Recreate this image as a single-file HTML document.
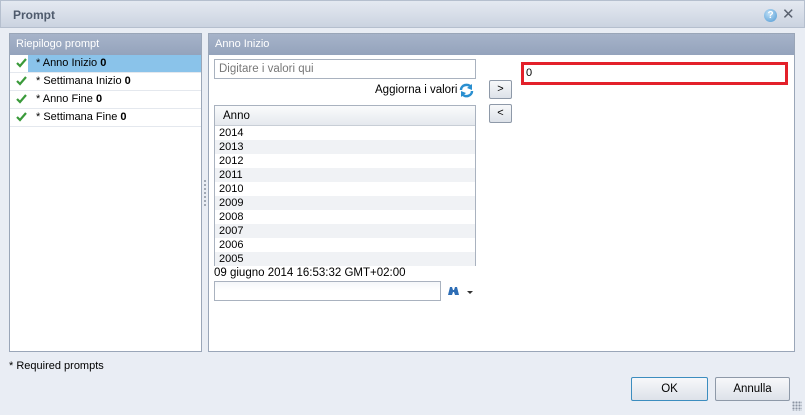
<!DOCTYPE html>
<html><head><style>
*{margin:0;padding:0;box-sizing:border-box}
body{width:805px;height:415px;overflow:hidden;background:#e9edf4;font-family:"Liberation Sans",sans-serif;font-size:11px;color:#000;position:relative}
.a{position:absolute}
.title{left:0;top:0;width:805px;height:28px;background:linear-gradient(#e4e9f1,#cbd3e0);border:1px solid #b5bfce}
.hdr{background:linear-gradient(#a6b3c9,#94a3bc);color:#fff;font-size:11px;padding:4px 6px;height:21px}
.row{height:18px;border-bottom:1px solid #e4e8ee;position:relative;padding-left:26px;line-height:17px}
.row .ck{position:absolute;left:6px;top:3px}
.lr{height:14px;line-height:14px;padding-left:4px;font-size:11px}
.btn{border:1px solid #8e99a8;border-radius:2px;background:linear-gradient(#f7f8fa,#dde2e9);text-align:center}
</style></head><body>
<div class="a title"><div class="a" style="left:12px;top:7px;font-weight:bold;font-size:12px;color:#4e5a6c">Prompt</div>
<div class="a" style="left:763px;top:8px;width:13px;height:13px;border-radius:50%;background:radial-gradient(circle at 40% 35%,#bfe0f7,#4d97d2);color:#fff;font-size:10px;font-weight:bold;text-align:center;line-height:13px">?</div>
<div class="a" style="left:781px;top:4px;font-size:15px;color:#5a6270">✕</div></div>

<div class="a" style="left:9px;top:33px;width:193px;height:319px;background:#fff;border:1px solid #9aa6b8">
<div class="hdr">Riepilogo prompt</div>
<div class="row" style="background:#fff"><div class="a" style="left:18px;top:0;width:173px;height:17px;background:#8ac3ea"></div><svg class="ck" width="11" height="10"><path d="M1 5 L4 8 L10 1" stroke="#3a9a3a" stroke-width="2.2" fill="none"/></svg><span style="position:relative">* Anno Inizio <b>0</b></span></div>
<div class="row"><svg class="ck" width="11" height="10"><path d="M1 5 L4 8 L10 1" stroke="#3a9a3a" stroke-width="2.2" fill="none"/></svg>* Settimana Inizio <b>0</b></div>
<div class="row"><svg class="ck" width="11" height="10"><path d="M1 5 L4 8 L10 1" stroke="#3a9a3a" stroke-width="2.2" fill="none"/></svg>* Anno Fine <b>0</b></div>
<div class="row"><svg class="ck" width="11" height="10"><path d="M1 5 L4 8 L10 1" stroke="#3a9a3a" stroke-width="2.2" fill="none"/></svg>* Settimana Fine <b>0</b></div>
</div>
<div class="a" style="left:204px;top:180px;width:2px;height:26px;border-left:2px dotted #a0a8b4"></div>

<div class="a" style="left:208px;top:33px;width:587px;height:319px;background:#fff;border:1px solid #9aa6b8">
<div class="hdr">Anno Inizio</div></div>
<div class="a" style="left:214px;top:59px;width:262px;height:20px;border:1px solid #a9b2bf;color:#777;padding:3px 4px;font-size:11.5px">Digitare i valori qui</div>
<div class="a" style="left:375px;top:84px;font-size:11.5px">Aggiorna i valori</div>
<svg class="a" style="left:458px;top:83px" width="17" height="15" viewBox="0 0 17 15"><path d="M3 7 A5.5 5 0 0 1 13 4" stroke="#2a8fd0" stroke-width="2.5" fill="none"/><path d="M14 1 L14 7 L9 5z" fill="#2a8fd0"/><path d="M14 8 A5.5 5 0 0 1 4 11" stroke="#2a8fd0" stroke-width="2.5" fill="none"/><path d="M3 14 L3 8 L8 10z" fill="#2a8fd0"/></svg>
<div class="a btn" style="left:489px;top:80px;width:23px;height:19px;line-height:17px">&gt;</div>
<div class="a btn" style="left:489px;top:104px;width:23px;height:19px;line-height:17px">&lt;</div>
<div class="a" style="left:521px;top:62px;width:267px;height:23px;border:3px solid #e3202a;padding:1px 2px;font-size:11px;line-height:14px">0</div>

<div class="a" style="left:214px;top:105px;width:262px;height:161px;border:1px solid #a9b2bf;background:#fff">
<div style="height:20px;background:linear-gradient(#fafbfc,#e5e9ee);border-bottom:1px solid #c8ced6;padding:4px 8px;font-size:11.5px">Anno</div>
<div class="lr">2014</div><div class="lr" style="background:#f0f2f5">2013</div><div class="lr">2012</div><div class="lr" style="background:#f0f2f5">2011</div><div class="lr">2010</div><div class="lr" style="background:#f0f2f5">2009</div><div class="lr">2008</div><div class="lr" style="background:#f0f2f5">2007</div><div class="lr">2006</div><div class="lr" style="background:#f0f2f5">2005</div>
</div>
<div class="a" style="left:214px;top:267px;font-size:11.5px">09 giugno 2014 16:53:32 GMT+02:00</div>
<div class="a" style="left:214px;top:281px;width:227px;height:20px;border:1px solid #a9b2bf;background:linear-gradient(#f4f6f9,#fff 50%)"></div>
<svg class="a" style="left:447px;top:285px" width="13" height="11"><path d="M1 10 L3 2 L5 2 L6 5 L7 5 L8 2 L10 2 L12 10 L8 10 L7 7 L6 7 L5 10z" fill="#2d6db5"/></svg>
<div class="a" style="left:467px;top:291px;border:3px solid transparent;border-top:3px solid #333"></div>

<div class="a" style="left:9px;top:360px;font-size:11px">* Required prompts</div>
<div class="a btn" style="left:631px;top:377px;width:77px;height:24px;line-height:22px;border-color:#3c8dbf;font-size:11.5px">OK</div>
<div class="a btn" style="left:715px;top:377px;width:75px;height:24px;line-height:22px;font-size:11.5px">Annulla</div>
<div class="a" style="left:792px;top:401px;width:10px;height:10px;background:radial-gradient(circle,#8a94a2 1px,transparent 1.2px) 0 0/3px 3px"></div>
</body></html>
